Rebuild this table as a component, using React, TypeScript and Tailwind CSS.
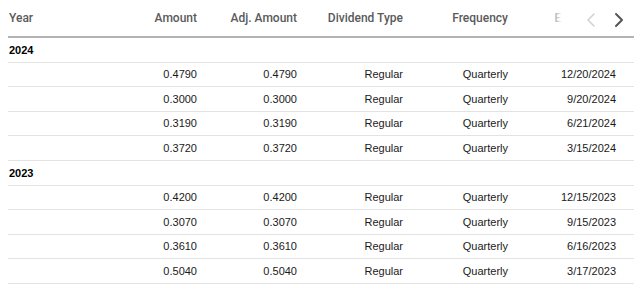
import React from "react";

type Row = { a: string; b: string; t: string; f: string; d: string };

const groups: { year: string; rows: Row[] }[] = [
  {
    year: "2024",
    rows: [
      { a: "0.4790", b: "0.4790", t: "Regular", f: "Quarterly", d: "12/20/2024" },
      { a: "0.3000", b: "0.3000", t: "Regular", f: "Quarterly", d: "9/20/2024" },
      { a: "0.3190", b: "0.3190", t: "Regular", f: "Quarterly", d: "6/21/2024" },
      { a: "0.3720", b: "0.3720", t: "Regular", f: "Quarterly", d: "3/15/2024" },
    ],
  },
  {
    year: "2023",
    rows: [
      { a: "0.4200", b: "0.4200", t: "Regular", f: "Quarterly", d: "12/15/2023" },
      { a: "0.3070", b: "0.3070", t: "Regular", f: "Quarterly", d: "9/15/2023" },
      { a: "0.3610", b: "0.3610", t: "Regular", f: "Quarterly", d: "6/16/2023" },
      { a: "0.5040", b: "0.5040", t: "Regular", f: "Quarterly", d: "3/17/2023" },
    ],
  },
];

export default function App() {
  return (
    <div className="w-[640px] h-[284px] bg-white overflow-hidden pl-2">
      <div className="w-[626px]">
        {/* header */}
        <div className="relative flex h-[38px] items-center border-b-2 border-[#b3b3b3] text-[12px] font-medium text-[#5a5a5a] [font-family:Roboto,'Liberation_Sans',sans-serif]">
          <div className="w-[100px] shrink-0 pl-px">Year</div>
          <div className="w-[89px] shrink-0 text-right">Amount</div>
          <div className="w-[100px] shrink-0 text-right">Adj. Amount</div>
          <div className="w-[106px] shrink-0 text-right">Dividend Type</div>
          <div className="w-[105px] shrink-0 text-right">Frequency</div>
          <div className="w-[108px] shrink-0 text-right whitespace-nowrap">Ex-Div Date</div>
          {/* fade + scroll arrows overlay */}
          <div className="absolute left-[540px] top-0 h-[36px] w-[14px] bg-gradient-to-r from-white/0 to-white" />
          <div className="absolute left-[554px] top-0 h-[36px] w-[72px] bg-white" />
          <svg className="absolute left-[571px] top-[8px]" width="24" height="24" viewBox="0 0 24 24" fill="none" stroke="#d0d0d0" strokeWidth="1.5" strokeLinecap="round" strokeLinejoin="round">
            <path d="M15 18l-6-6 6-6" />
          </svg>
          <svg className="absolute left-[599px] top-[8px]" width="24" height="24" viewBox="0 0 24 24" fill="none" stroke="#555" strokeWidth="2" strokeLinecap="round" strokeLinejoin="round">
            <path d="M9 18l6-6-6-6" />
          </svg>
        </div>
        {/* body */}
        <div className="text-[11px] text-[#1a1a1a] [font-family:'Liberation_Sans',Arial,sans-serif]">
          {groups.map((g) => (
            <React.Fragment key={g.year}>
              <div className="flex h-[24.6px] items-center border-b border-[#e3e3e3] font-bold text-black">
                <div className="pl-px">{g.year}</div>
              </div>
              {g.rows.map((r, i) => (
                <div key={i} className="flex h-[24.6px] items-center border-b border-[#e3e3e3]">
                  <div className="w-[100px] shrink-0" />
                  <div className="w-[89px] shrink-0 text-right">{r.a}</div>
                  <div className="w-[100px] shrink-0 text-right">{r.b}</div>
                  <div className="w-[106px] shrink-0 text-right">{r.t}</div>
                  <div className="w-[105px] shrink-0 text-right">{r.f}</div>
                  <div className="w-[108px] shrink-0 text-right">{r.d}</div>
                </div>
              ))}
            </React.Fragment>
          ))}
        </div>
      </div>
    </div>
  );
}
